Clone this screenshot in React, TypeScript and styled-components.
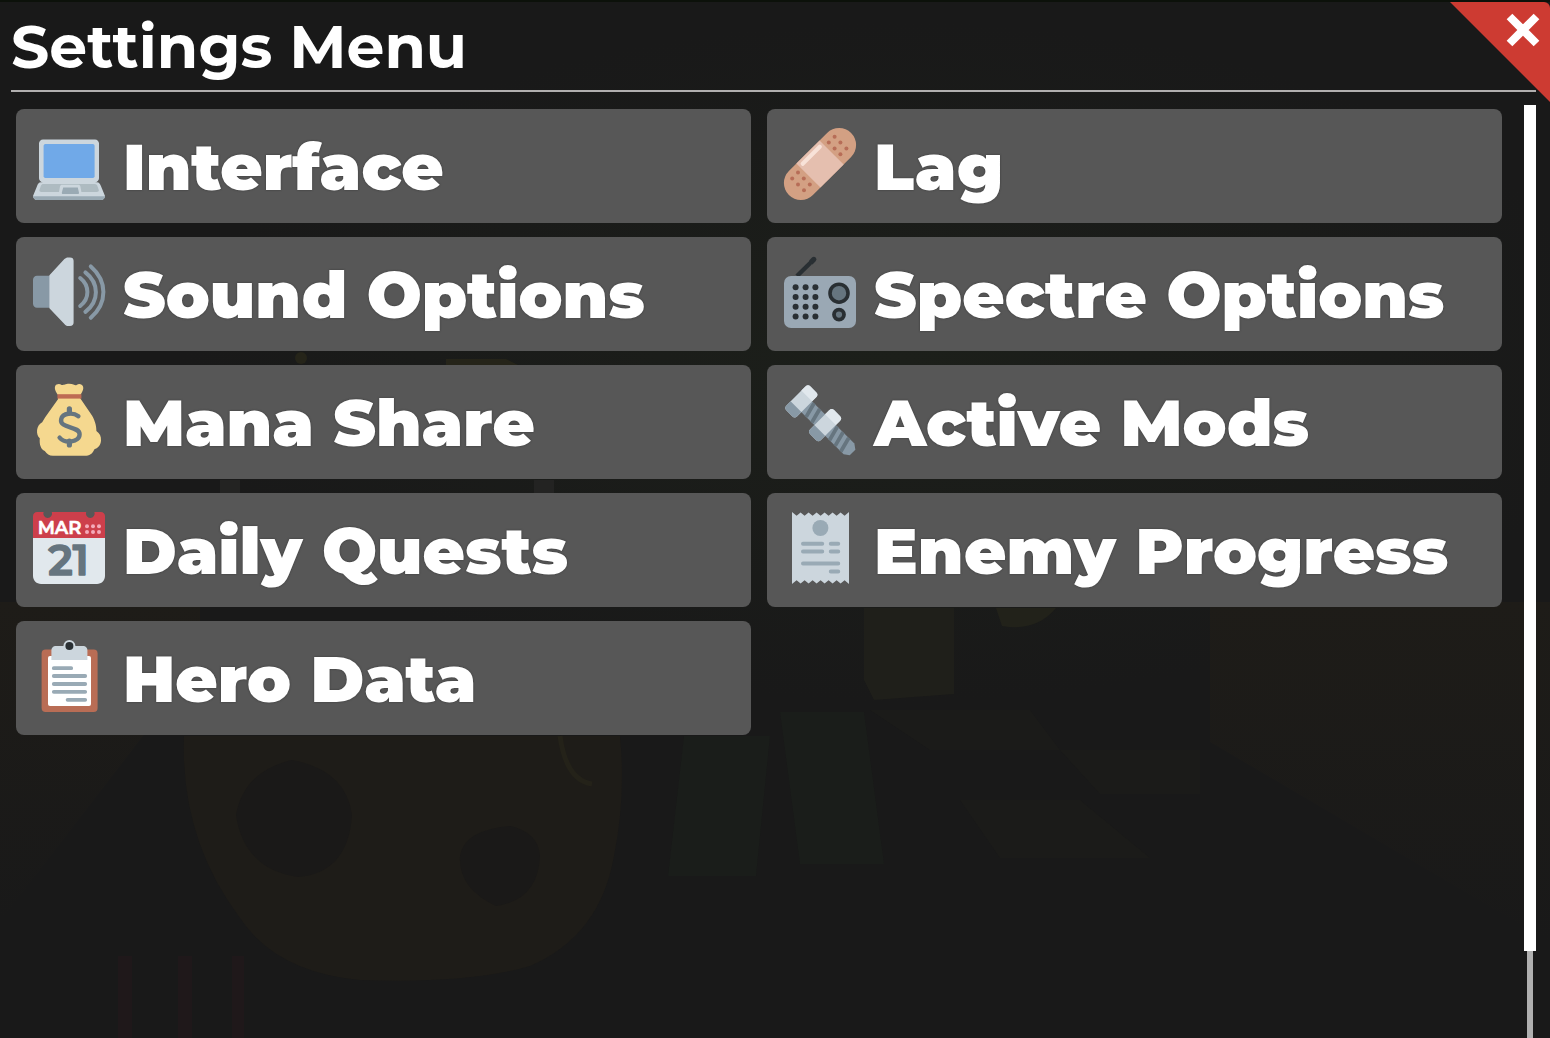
import React from "react";
import styled, { createGlobalStyle } from "styled-components";

const GlobalStyle = createGlobalStyle`
  *, *::before, *::after { box-sizing: border-box; }
  html, body, #root { height: 100%; }
  body {
    margin: 0;
    overflow: hidden;
    background: #191919;
    font-family: Montserrat, Inter, sans-serif;
    color: #fff;
  }
`;

const Panel = styled.main`
  position: relative;
  isolation: isolate;
  display: flex;
  flex-direction: column;
  height: 100%;
  border-top: 2px solid #0c110a;
`;

const Scene = styled.svg`
  position: absolute;
  inset: 0;
  z-index: -1;
  width: 100%;
  height: 100%;
`;

const Header = styled.header`
  flex: none;
  height: 90px;
  margin: 0 14px 0 11px;
  border-bottom: 2px solid #b1afaf;
`;

const Title = styled.h1`
  margin: 0;
  padding-top: 9px;
  font-size: 60px;
  line-height: 72px;
  font-weight: 700;
  white-space: nowrap;
`;

const CloseButton = styled.button`
  position: absolute;
  top: 0;
  right: 0;
  width: 100px;
  height: 100px;
  padding: 0;
  border: 0;
  border-top-right-radius: 6px;
  background: #cd3b32;
  clip-path: polygon(0 0, 100% 0, 100% 100%);
  cursor: pointer;

  svg {
    position: absolute;
    top: 8px;
    right: 7px;
    width: 40px;
    height: 40px;
  }
`;

const Body = styled.div`
  flex: 1;
  min-height: 0;
  display: flex;
  gap: 22px;
  padding: 13px 14px 0 16px;
`;

const Grid = styled.nav`
  flex: 1;
  min-width: 0;
  display: grid;
  grid-template-columns: repeat(2, minmax(0, 1fr));
  gap: 14px 16px;
  align-content: start;
  padding-top: 4px;
`;

const OptionButton = styled.button`
  display: flex;
  align-items: center;
  gap: 18px;
  height: 114px;
  padding: 0 17px 4px;
  border: 0;
  border-radius: 8px;
  background: #575757;
  color: #fff;
  font: inherit;
  text-align: left;
  cursor: pointer;
`;

const Icon = styled.svg`
  flex: none;
  width: 72px;
  height: 72px;
  overflow: visible;
`;

const Label = styled.span`
  padding-top: 6px;
  font-size: 65px;
  line-height: 80px;
  font-weight: 900;
  white-space: nowrap;
  text-shadow: 0 0 2px #333;
`;

const Track = styled.div`
  flex: none;
  width: 12px;
  background: linear-gradient(#b0b0b0, #b0b0b0) center / 6px 100% no-repeat;
`;

const Thumb = styled.div`
  height: calc(91% - 3px);
  background: #fff;
`;

const Laptop = () => (
  <Icon viewBox="0 0 36 36" aria-hidden="true">
    <path fill="#CCD6DD" d="M34 29.1c-.4-1-.9-2-2-2h-1c1.100 0 2-.9 2-2V7.700c0-1.100-.9-2-2-2H5c-1.100 0-2 .9-2 2v17.400c0 1.100.9 2 2 2H4c-1.100 0-1.700 1-2 2L0 34c0 1.100.9 2 2 2h32c1.100 0 2-.9 2-2l-2-4.900z" />
    <path fill="#9AAAB4" d="M0 34.1C.2 35.200 1 36 2 36h32c1.100 0 1.950-.9 2-1.900z" />
    <rect x="5.3" y="8" width="25.500" height="17" rx=".9" fill="#70A9E8" />
    <path fill="#AEBBC1" d="M32.900 31l-.8-2.200c-.2-.4-.6-.8-1.100-.8H5.100c-.5 0-.9.300-1.100.8L3.200 31c-.2.500.4 1 1 1h27.700c.6 0 1.200-.5 1-1z" />
    <path fill="#CCD6DD" d="M14.600 28.400h8c.6 0 1 .3 1.100.8l.6 3.300h-11.400l.6-3.300c.1-.5.5-.8 1.100-.8z" />
    <path fill="#9AAAB4" d="M15.100 29.700h7.300l.6 2.700c0 .4-.2.600-.5.600h-7.600c-.3 0-.5-.2-.5-.6z" />
  </Icon>
);

const BANDAGE_DOTS = [
  [6.6, 22.3], [3.7, 25.2], [9.5, 25.2], [6.6, 28.2], [12.5, 28.2], [9.6, 31.1],
  [24.9, 4.4], [22, 7.3], [27.8, 7.3], [24.9, 10.2], [30.8, 10.2], [27.8, 13.1],
];

const Bandage = () => (
  <Icon viewBox="0 0 36 36" aria-hidden="true">
    <g transform="rotate(-45 18 18)">
      <rect x="-4" y="9.5" width="44" height="17" rx="8.500" fill="#D3A083" />
      <rect x="9.8" y="9.5" width="16.4" height="17" fill="#E5BFAF" />
      <rect x="11" y="10.8" width="14" height="2" rx=".8" fill="#F8E2D8" />
    </g>
    {BANDAGE_DOTS.map(([x, y]) => (
      <circle key={`${x}-${y}`} cx={x + 0.4} cy={y} r="1" fill="#B76D57" />
    ))}
  </Icon>
);

const Speaker = () => (
  <Icon viewBox="0 0 36 36" aria-hidden="true">
    <path fill="#8899A6" d="M8.500 9.900H2c-1.200 0-2 .9-2 2v12c0 1.100.8 2 2 2h6.500z" />
    <path fill="#CCD6DD" d="M18.500.7h-1c-.7 0-1.200.3-1.800.8L8.200 9.600v16.500l7.500 7.900c.6.700 1.100 1 1.800 1h1c1.200 0 1.800-.6 1.800-1.700V2.400c0-1.100-.6-1.700-1.800-1.700z" />
    <g fill="none" stroke="#8899A6" strokeWidth="2" strokeLinecap="round">
      <path d="M23.600 11c4.800 3.800 4.800 10.300 0 14" />
      <path d="M26.200 8.200c7 5.500 7 14.300 0 19.700" />
      <path d="M28.900 5.200c8.400 7.300 8.400 18.400 0 25.700" />
    </g>
  </Icon>
);

const Radio = () => (
  <Icon viewBox="0 0 36 36" aria-hidden="true">
    <path d="M6.500 10L13 3.600" stroke="#292F33" strokeWidth="2.200" />
    <path d="M13.700 2.900l1.200-1.200" stroke="#292F33" strokeWidth="2.600" strokeLinecap="round" />
    <rect y="10" width="36" height="26" rx="3.500" fill="#9AA8B4" />
    {[15.6, 20.5, 25.4, 30.3].map((y) =>
      [5.8, 10.8, 15.7].map((x) => <circle key={`${x}-${y}`} cx={x} cy={y} r="1.500" fill="#292F33" />)
    )}
    <circle cx="27.500" cy="18.600" r="4.500" fill="#66757F" stroke="#292F33" strokeWidth="1.800" />
    <circle cx="27.500" cy="29.300" r="2.500" fill="#66757F" stroke="#292F33" strokeWidth="1.900" />
  </Icon>
);

const MoneyBag = () => (
  <Icon viewBox="0 0 36 36" aria-hidden="true">
    <path fill="#F5D88F" d="M12.500 5.500C10.500 3 10.600.9 11.800.3c1-.6 1.800-.3 2.500.2 1 .3 1.500-.6 3.800-.6s2.800 1 3.700.6c.8-.5 1.600-.7 2.500-.1 1.400.9 1 3-.7 5.100v1.600l5.900 8.700c1.800 3.200 2.200 5.700 2.200 7.700 1.700 1.200 2.400 2.700 2.300 4.600 0 2.500-1.600 3.900-3.400 4.600-.7 2.200-2.600 3.200-4.600 3.200H10c-2 0-3-.8-4.100-2.400-2-.9-2.800-3.200-2.500-6.400-2.100-1.700-1.900-6.500 1.200-8l1.500-2.500 6.400-9z" />
    <path fill="#BE6B53" d="M12.200 5.100h12v2.200h-12z" />
    <g fill="none" stroke="#66757F" strokeWidth="2.200" strokeLinecap="round" strokeLinejoin="round">
      <path d="M18.200 12.400v2M18.200 28.500v2" strokeWidth="2.600" />
      <path d="M22.700 16.100c-2.600-2-7.900-1.700-8.600 1.500-1.100 4.800 9.200 3.200 9.200 7.500 0 4.100-7.300 4.900-10 1.700" />
    </g>
  </Icon>
);

const Bolt = () => (
  <Icon viewBox="0 0 36 36" aria-hidden="true">
    <g transform="rotate(45 18 18)">
      <path fill="#8899A6" d="M3 14.200h35.500l2.500 1.800v4l-2.500 1.800H3z" />
      <path d="M10 14.200l2 7.600M14 14.200l2 7.600M26.500 14.200l2 7.600M30.500 14.200l2 7.600M34.500 14.200l2 7.600" stroke="#66757F" strokeWidth="1.900" />
      {[1, 17.8].map((x) => (
        <g key={x}>
          <rect x={x} y="9.500" width="7.600" height="17" rx="1.800" fill="#CCD6DD" />
          <path fill="#E1E8ED" d={`M${x} 14.200v-2.900q0-1.800 1.800-1.800h4q1.800 0 1.800 1.800v2.900z`} />
          <path fill="#8899A6" d={`M${x} 21.800v2.900q0 1.800 1.800 1.800h4q1.800 0 1.800-1.800v-2.900z`} />
        </g>
      ))}
    </g>
  </Icon>
);

const CalendarText = styled.text`
  font-family: Montserrat, Lato, sans-serif;
  font-weight: 600;
  text-anchor: middle;
`;

const Calendar = () => (
  <Icon viewBox="0 0 36 36" aria-hidden="true">
    <path fill="#E1E8ED" d="M36 32c0 2.200-1.800 4-4 4H4c-2.200 0-4-1.800-4-4V9h36z" />
    <path fill="#CD3F4B" d="M34 0h-3.300a2.200 2.200 0 1 1-4.100 0H9.400a2.200 2.200 0 1 1-4.100 0H2C.9 0 0 .9 0 2v11h36V2c0-1.100-.9-2-2-2z" />
    {[7.1, 10].map((y) =>
      [27, 30, 33].map((x) => <circle key={`${x}-${y}`} cx={x} cy={y} r="1" fill="#F4ABBA" />)
    )}
    <CalendarText x="13.300" y="11" fontSize="9" fill="#fff" stroke="#fff" strokeWidth=".3" strokeLinejoin="round">MAR</CalendarText>
    <CalendarText x="17.800" y="31.300" fontSize="21" fill="#66757F" stroke="#66757F" strokeWidth=".8" strokeLinejoin="round">21</CalendarText>
  </Icon>
);

const Receipt = () => (
  <Icon viewBox="0 0 36 36" aria-hidden="true">
    <path fill="#CCD6DD" d="M4 0l2.300 1.900 2-1.700 2 1.700 2-1.700 2 1.700 2-1.700 2 1.700 2-1.700 2 1.700 2-1.700 2 1.700 2-1.700 2 1.700L32.500 0v36l-2.200-1.900-2 1.700-2-1.700-2 1.700-2-1.700-2 1.700-2-1.700-2 1.700-2-1.700-2 1.700-2-1.700-2 1.700-2-1.700L4 36z" />
    <circle cx="18.200" cy="8" r="4" fill="#99AAB5" />
    <path d="M9.500 15.900h9.600M23.400 15.900h3.700M9.500 19.800h9.600M23.400 19.800h3.700M9.500 25.800h17.600M23.400 29.700h3.700" stroke="#99AAB5" strokeWidth="2" strokeLinecap="round" />
  </Icon>
);

const Clipboard = () => (
  <Icon viewBox="0 0 36 36" aria-hidden="true">
    <rect x="4.300" y="4.800" width="28" height="31.200" rx="2" fill="#B96D55" />
    <rect x="7.500" y="8" width="21.500" height="25" rx="1" fill="#fff" />
    <path fill="#CCD6DD" d="M25.200 3h-4a3 3 0 0 0-6 0h-4c-1 0-2 .9-2 2v5h18V5c0-1.100-.9-2-2-2z" />
    <circle cx="18.200" cy="3" r="2" fill="#292F33" />
    <path d="M10.400 14.100h8.700M10.400 18h15.700M10.400 22h15.700M10.400 25.900h15.700M17.300 29.900h8.800" stroke="#99AAB5" strokeWidth="1.900" strokeLinecap="round" />
  </Icon>
);

const OPTIONS = [
  { label: "Interface", Glyph: Laptop },
  { label: "Lag", Glyph: Bandage },
  { label: "Sound Options", Glyph: Speaker },
  { label: "Spectre Options", Glyph: Radio },
  { label: "Mana Share", Glyph: MoneyBag },
  { label: "Active Mods", Glyph: Bolt },
  { label: "Daily Quests", Glyph: Calendar },
  { label: "Enemy Progress", Glyph: Receipt },
  { label: "Hero Data", Glyph: Clipboard },
];

/* The game world, barely visible through the dark panel. */
const GameScene = () => (
  <Scene viewBox="0 0 1550 1036" preserveAspectRatio="none" aria-hidden="true">
    <defs>
      <radialGradient id="wall">
        <stop offset="0" stopColor="#1c1f1a" />
        <stop offset="1" stopColor="#1c1f1a" stopOpacity="0" />
      </radialGradient>
      <linearGradient id="side" x1="0" y1="0" x2="0" y2="1">
        <stop offset="0" stopColor="#1e1c18" />
        <stop offset="1" stopColor="#191919" />
      </linearGradient>
    </defs>
    <ellipse cx="900" cy="360" rx="720" ry="340" fill="url(#wall)" />
    <path fill="url(#side)" d="M1210 600h340v340L1210 740z" />
    <path fill="url(#side)" d="M0 600h200v60L0 920z" />
    <path fill="#1e1c18" d="M184 734h436q6 60-6 120-14 80-84 110-60 18-170 14-84-8-120-62-60-80-56-182z" />
    <path fill="#1a1918" d="M292 758q54 10 60 55-4 58-54 62-54-8-62-62 8-44 56-55zM510 824q28 6 30 30-2 44-44 50-38-18-36-50 4-26 50-30z" />
    <path fill="none" stroke="#242219" strokeWidth="5" d="M560 734q6 44 32 48" />
    <path fill="#1a1d1a" d="M684 734h86l-14 140h-88zM780 710h84l20 152h-84z" />
    <path fill="#1f1f1a" d="M864 606h90v86l-80 6-10-20z" />
    <path fill="#1b1b19" d="M870 708h160l30 40H930zM1060 748h140v44h-100zM960 798h120l70 58h-150z" />
    <path fill="#1f181a" d="M118 954h14v82h-14zM178 954h14v82h-14zM232 954h12v82h-12z" />
    <path fill="#252419" d="M446 357h60l12 6H446z" />
    <circle cx="301" cy="356" r="6" fill="#252419" />
    <path fill="#232322" d="M220 478h20v14h-20zM534 478h20v14h-20z" />
    <path fill="#22221a" d="M996 606h60q-20 24-54 18z" />
  </Scene>
);

export default function App() {
  return (
    <>
      <GlobalStyle />
      <Panel>
        <GameScene />
        <Header>
          <Title>Settings Menu</Title>
        </Header>
        <CloseButton type="button" aria-label="Close">
          <svg viewBox="0 0 40 40" aria-hidden="true">
            <path d="M6.500 6.500l27 27M33.500 6.500l-27 27" stroke="#fff" strokeWidth="8" />
          </svg>
        </CloseButton>
        <Body>
          <Grid aria-label="Settings categories">
            {OPTIONS.map(({ label, Glyph }) => (
              <OptionButton key={label} type="button">
                <Glyph />
                <Label>{label}</Label>
              </OptionButton>
            ))}
          </Grid>
          <Track>
            <Thumb />
          </Track>
        </Body>
      </Panel>
    </>
  );
}
